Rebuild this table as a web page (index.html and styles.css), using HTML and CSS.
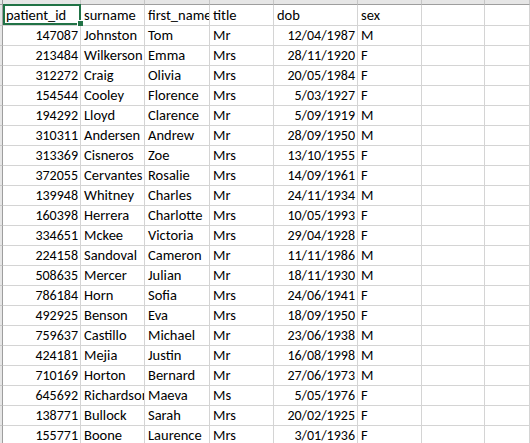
FILE: index.html
```html
<!DOCTYPE html>
<html lang="en">
<head>
<meta charset="utf-8">
<title>patients</title>
<link rel="stylesheet" href="styles.css">
</head>
<body>
<div class="sheet">
  <div class="corner"></div>
  <div class="colhead"></div><div class="colhead"></div><div class="colhead"></div><div class="colhead"></div><div class="colhead"></div><div class="colhead"></div><div class="colhead"></div><div class="colhead last"></div>

  <div class="rowhead first"></div>
  <div class="cell txt first selected">patient_id</div><div class="cell txt first">surname</div><div class="cell txt first">first_name</div><div class="cell txt first">title</div><div class="cell txt first">dob</div><div class="cell txt first">sex</div><div class="cell first"></div><div class="cell first last"></div>

  <div class="rowhead"></div><div class="cell num">147087</div><div class="cell txt">Johnston</div><div class="cell txt">Tom</div><div class="cell txt">Mr</div><div class="cell num">12/04/1987</div><div class="cell txt">M</div><div class="cell"></div><div class="cell last"></div>
  <div class="rowhead"></div><div class="cell num">213484</div><div class="cell txt">Wilkerson</div><div class="cell txt">Emma</div><div class="cell txt">Mrs</div><div class="cell num">28/11/1920</div><div class="cell txt">F</div><div class="cell"></div><div class="cell last"></div>
  <div class="rowhead"></div><div class="cell num">312272</div><div class="cell txt">Craig</div><div class="cell txt">Olivia</div><div class="cell txt">Mrs</div><div class="cell num">20/05/1984</div><div class="cell txt">F</div><div class="cell"></div><div class="cell last"></div>
  <div class="rowhead"></div><div class="cell num">154544</div><div class="cell txt">Cooley</div><div class="cell txt">Florence</div><div class="cell txt">Mrs</div><div class="cell num">5/03/1927</div><div class="cell txt">F</div><div class="cell"></div><div class="cell last"></div>
  <div class="rowhead"></div><div class="cell num">194292</div><div class="cell txt">Lloyd</div><div class="cell txt">Clarence</div><div class="cell txt">Mr</div><div class="cell num">5/09/1919</div><div class="cell txt">M</div><div class="cell"></div><div class="cell last"></div>
  <div class="rowhead"></div><div class="cell num">310311</div><div class="cell txt">Andersen</div><div class="cell txt">Andrew</div><div class="cell txt">Mr</div><div class="cell num">28/09/1950</div><div class="cell txt">M</div><div class="cell"></div><div class="cell last"></div>
  <div class="rowhead"></div><div class="cell num">313369</div><div class="cell txt">Cisneros</div><div class="cell txt">Zoe</div><div class="cell txt">Mrs</div><div class="cell num">13/10/1955</div><div class="cell txt">F</div><div class="cell"></div><div class="cell last"></div>
  <div class="rowhead"></div><div class="cell num">372055</div><div class="cell txt">Cervantes</div><div class="cell txt">Rosalie</div><div class="cell txt">Mrs</div><div class="cell num">14/09/1961</div><div class="cell txt">F</div><div class="cell"></div><div class="cell last"></div>
  <div class="rowhead"></div><div class="cell num">139948</div><div class="cell txt">Whitney</div><div class="cell txt">Charles</div><div class="cell txt">Mr</div><div class="cell num">24/11/1934</div><div class="cell txt">M</div><div class="cell"></div><div class="cell last"></div>
  <div class="rowhead"></div><div class="cell num">160398</div><div class="cell txt">Herrera</div><div class="cell txt">Charlotte</div><div class="cell txt">Mrs</div><div class="cell num">10/05/1993</div><div class="cell txt">F</div><div class="cell"></div><div class="cell last"></div>
  <div class="rowhead"></div><div class="cell num">334651</div><div class="cell txt">Mckee</div><div class="cell txt">Victoria</div><div class="cell txt">Mrs</div><div class="cell num">29/04/1928</div><div class="cell txt">F</div><div class="cell"></div><div class="cell last"></div>
  <div class="rowhead"></div><div class="cell num">224158</div><div class="cell txt">Sandoval</div><div class="cell txt">Cameron</div><div class="cell txt">Mr</div><div class="cell num">11/11/1986</div><div class="cell txt">M</div><div class="cell"></div><div class="cell last"></div>
  <div class="rowhead"></div><div class="cell num">508635</div><div class="cell txt">Mercer</div><div class="cell txt">Julian</div><div class="cell txt">Mr</div><div class="cell num">18/11/1930</div><div class="cell txt">M</div><div class="cell"></div><div class="cell last"></div>
  <div class="rowhead"></div><div class="cell num">786184</div><div class="cell txt">Horn</div><div class="cell txt">Sofia</div><div class="cell txt">Mrs</div><div class="cell num">24/06/1941</div><div class="cell txt">F</div><div class="cell"></div><div class="cell last"></div>
  <div class="rowhead"></div><div class="cell num">492925</div><div class="cell txt">Benson</div><div class="cell txt">Eva</div><div class="cell txt">Mrs</div><div class="cell num">18/09/1950</div><div class="cell txt">F</div><div class="cell"></div><div class="cell last"></div>
  <div class="rowhead"></div><div class="cell num">759637</div><div class="cell txt">Castillo</div><div class="cell txt">Michael</div><div class="cell txt">Mr</div><div class="cell num">23/06/1938</div><div class="cell txt">M</div><div class="cell"></div><div class="cell last"></div>
  <div class="rowhead"></div><div class="cell num">424181</div><div class="cell txt">Mejia</div><div class="cell txt">Justin</div><div class="cell txt">Mr</div><div class="cell num">16/08/1998</div><div class="cell txt">M</div><div class="cell"></div><div class="cell last"></div>
  <div class="rowhead"></div><div class="cell num">710169</div><div class="cell txt">Horton</div><div class="cell txt">Bernard</div><div class="cell txt">Mr</div><div class="cell num">27/06/1973</div><div class="cell txt">M</div><div class="cell"></div><div class="cell last"></div>
  <div class="rowhead"></div><div class="cell num">645692</div><div class="cell txt">Richardson</div><div class="cell txt">Maeva</div><div class="cell txt">Ms</div><div class="cell num">5/05/1976</div><div class="cell txt">F</div><div class="cell"></div><div class="cell last"></div>
  <div class="rowhead"></div><div class="cell num">138771</div><div class="cell txt">Bullock</div><div class="cell txt">Sarah</div><div class="cell txt">Mrs</div><div class="cell num">20/02/1925</div><div class="cell txt">F</div><div class="cell"></div><div class="cell last"></div>
  <div class="rowhead"></div><div class="cell num">155771</div><div class="cell txt">Boone</div><div class="cell txt">Laurence</div><div class="cell txt">Mrs</div><div class="cell num">3/01/1936</div><div class="cell txt">F</div><div class="cell"></div><div class="cell last"></div>
</div>
</body>
</html>
```

FILE: styles.css
```css
html, body {
  margin: 0;
  padding: 0;
  background: #ffffff;
  overflow: hidden;
}

.sheet {
  display: grid;
  grid-template-columns: 3px 78px 64px 65px 64px 84px 64px 63px 1fr;
  grid-auto-rows: 20px;
  grid-template-rows: 5px 21px;
  font-family: Calibri, Carlito, Lato, "Liberation Sans", sans-serif;
  font-size: 14px;
  color: #000000;
  width: 530px;
  overflow: hidden;
}

.corner {
  background: #e6e6e6;
  border-bottom: 1px solid #9e9e9e;
  border-right: 1px solid #9e9e9e;
  box-sizing: border-box;
}

.colhead {
  background: #e6e6e6;
  border-bottom: 1px solid #9e9e9e;
  border-right: 1px solid #c6c6c6;
  box-sizing: border-box;
}

.rowhead {
  background: #e6e6e6;
  border-right: 1px solid #9e9e9e;
  border-bottom: 1px solid #c6c6c6;
  box-sizing: border-box;
}

.cell {
  box-sizing: border-box;
  border-right: 1px solid #d4d4d4;
  border-bottom: 1px solid #d4d4d4;
  white-space: nowrap;
  overflow: hidden;
  line-height: 19px;
  padding: 0 2px 0 3px;
}

.cell.first {
  line-height: 20px;
}

.num {
  text-align: right;
}

.txt {
  text-align: left;
  font-size: 14.5px;
}

.selected {
  position: relative;
  overflow: visible;
  z-index: 2;
}

.selected::before {
  content: "";
  position: absolute;
  left: 0;
  top: -1px;
  right: -1px;
  bottom: 0;
  border: 2px solid #217346;
  pointer-events: none;
}

.selected::after {
  content: "";
  position: absolute;
  right: -3px;
  bottom: -1px;
  width: 5px;
  height: 5px;
  background: #217346;
  border: 1px solid #ffffff;
  border-right-width: 0;
  border-bottom-width: 0;
}
```
